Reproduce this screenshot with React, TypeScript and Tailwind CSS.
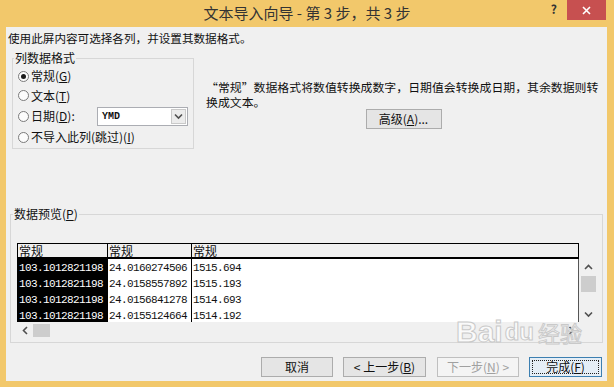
import React from 'react';

const rows = [
  ['103.1012821198', '24.0160274506', '1515.694'],
  ['103.1012821198', '24.0158557892', '1515.193'],
  ['103.1012821198', '24.0156841278', '1514.693'],
  ['103.1012821198', '24.0155124664', '1514.192'],
];

const Chevron: React.FC<{ dir: 'up' | 'down' | 'left' | 'right' }> = ({ dir }) => {
  const d = {
    up: 'M1 5 L4.5 1.5 L8 5',
    down: 'M1 1.5 L4.5 5 L8 1.5',
    left: 'M5 1 L1.5 4.5 L5 8',
    right: 'M1.5 1 L5 4.5 L1.5 8',
  }[dir];
  const vertical = dir === 'up' || dir === 'down';
  return (
    <svg width={vertical ? 9 : 7} height={vertical ? 7 : 9} viewBox={vertical ? '0 0 9 7' : '0 0 7 9'}>
      <path d={d} fill="none" stroke="#505050" strokeWidth="1.6" />
    </svg>
  );
};

const Radio: React.FC<{ checked?: boolean; children: React.ReactNode }> = ({ checked, children }) => (
  <div className="flex items-center">
    <span className="flex h-[11px] w-[11px] items-center justify-center rounded-full border border-[#7a7a7a] bg-[#fcfcfc]">
      {checked && <span className="h-[5px] w-[5px] rounded-full bg-[#1a1a1a]" />}
    </span>
    <span className="ml-[2px]">{children}</span>
  </div>
);

export default function App() {
  return (
    <div className="relative flex h-[387px] w-[614px] flex-col overflow-hidden bg-[#f2c86b] font-['Noto_Sans_CJK_SC',sans-serif] text-[12px] leading-[16px] text-[#111]">
      {/* title bar */}
      <div className="grid h-[27px] grid-cols-[69px_1fr_69px]">
        <div />
        <div className="pt-[3px] text-center text-[15px] leading-[20px] text-[#333]">文本导入向导 - 第 3 步，共 3 步</div>
        <div className="flex items-start justify-end pr-[8px]">
          <span className="mr-[10px] mt-[1px] text-[12px] font-bold text-[#333]">?</span>
          <div className="flex h-[20px] w-[39px] shrink-0 items-center justify-center bg-[#c75050]">
            <svg width="9" height="9" viewBox="0 0 9 9">
              <path d="M1 1 L8 8 M8 1 L1 8" stroke="#fff" strokeWidth="1.6" />
            </svg>
          </div>
        </div>
      </div>

      {/* dialog body */}
      <div className="mb-[6px] ml-[6px] mr-[7px] flex flex-1 flex-col bg-[#f0f0f0]">
        <div className="ml-[2px] pt-[3px] text-[11.6px]">使用此屏内容可选择各列，并设置其数据格式。</div>

        <div className="mt-[4px] flex">
          <fieldset className="ml-[6px] h-[99px] w-[182px] shrink-0 border border-[#d7d7d7] pl-[1px]">
            <legend className="px-[1px] leading-[16px]">列数据格式</legend>
            <div className="flex flex-col pl-[4px] pr-[5px]">
              <div className="flex h-[20px] items-center">
                <Radio checked>常规(<u>G</u>)</Radio>
              </div>
              <div className="flex h-[19px] items-center">
                <Radio>文本(<u>T</u>)</Radio>
              </div>
              <div className="flex h-[22px] items-center">
                <Radio>日期(<u>D</u>):</Radio>
                <div className="ml-auto flex h-[19px] w-[91px] border border-[#abadb3] bg-white">
                  <span className="flex-1 pl-[4px] font-['Liberation_Mono',monospace] text-[10px] font-bold leading-[17px]">YMD</span>
                  <span className="m-[1px] flex w-[15px] items-center justify-center border border-[#c9c9c9] bg-[#ececec]">
                    <Chevron dir="down" />
                  </span>
                </div>
              </div>
              <div className="flex h-[20px] items-center">
                <Radio>不导入此列(跳过)(<u>I</u>)</Radio>
              </div>
            </div>
          </fieldset>

          <div className="ml-[12px] flex flex-1 flex-col pt-[29px]">
            <p className="whitespace-nowrap text-[11.9px] leading-[15px]">
              “常规”数据格式将数值转换成数字，日期值会转换成日期，其余数据则转
              <br />
              换成文本。
            </p>
            <div className="flex justify-center pr-[6px]">
              <button className="h-[20px] w-[76px] border border-[#acacac] bg-[#e5e5e5] text-[12px] leading-[16px]">
                高级(<u>A</u>)...
              </button>
            </div>
          </div>
        </div>

        <fieldset className="ml-[4px] mt-[57px] h-[137px] w-[593px] border border-[#d7d7d7] pl-[2px]">
          <legend className="px-[1px] leading-[16px]">数据预览(<u>P</u>)</legend>
          <div className="ml-[4px] mt-[21px] flex w-[580px] flex-col">
            {/* header */}
            <div className="flex h-[16px]">
              <div className="flex w-[562px] border-x border-b-2 border-t border-black bg-[#f0f0f0] leading-[13px]">
                <div className="w-[90px] border-r border-black pl-[1px]">常规</div>
                <div className="w-[84px] border-r border-black pl-[1px]">常规</div>
                <div className="flex-1 pl-[1px]">常规</div>
              </div>
            </div>
            {/* body */}
            <div className="flex h-[63px]">
              <div className="flex w-[562px] border-x border-l-black border-r-[#555] bg-white font-['Liberation_Mono',monospace] text-[11px] leading-[16px] tracking-[-0.6px]">
                <div className="flex w-[90px] flex-col bg-black pl-[1px] pt-[1px] text-white">
                  {rows.map((r, i) => (
                    <div key={i} className="h-[16px]">{r[0]}</div>
                  ))}
                </div>
                <div className="flex w-[84px] flex-col border-r border-black pl-[1px] pt-[1px]">
                  {rows.map((r, i) => (
                    <div key={i} className="h-[16px]">{r[1]}</div>
                  ))}
                </div>
                <div className="flex flex-1 flex-col pl-[1px] pt-[1px]">
                  {rows.map((r, i) => (
                    <div key={i} className="h-[16px]">{r[2]}</div>
                  ))}
                </div>
              </div>
              <div className="flex w-[18px] flex-col items-center">
                <div className="flex h-[16px] items-center justify-center"><Chevron dir="up" /></div>
                <div className="mt-[1px] h-[16px] w-[15px] bg-[#cdcdcd]" />
                <div className="flex-1" />
                <div className="flex h-[16px] items-center justify-center"><Chevron dir="down" /></div>
              </div>
            </div>
            {/* horizontal scrollbar */}
            <div className="flex h-[16px] w-[562px] items-center">
              <div className="flex w-[16px] items-center justify-center"><Chevron dir="left" /></div>
              <div className="h-[13px] w-[17px] bg-[#cdcdcd]" />
              <div className="flex-1" />
              <div className="flex w-[16px] items-center justify-center"><Chevron dir="right" /></div>
            </div>
          </div>
        </fieldset>

        <div className="mt-[14px] flex justify-end pr-[5px]">
          <button className="h-[20px] w-[72px] border border-[#acacac] bg-[#e5e5e5] text-[12px]">取消</button>
          <button className="ml-[10px] h-[20px] w-[83px] border border-[#acacac] bg-[#e5e5e5] text-[12px]">
            &lt; 上一步(<u>B</u>)
          </button>
          <button className="ml-[11px] h-[20px] w-[82px] border border-[#bfbfbf] bg-[#f4f4f4] text-[12px] text-[#a0a0a0]">
            下一步(<u>N</u>) &gt;
          </button>
          <button className="ml-[10px] flex h-[20px] w-[73px] items-stretch border border-[#3c7fb1] bg-[#e5eef6] p-[2px] text-[12px]">
            <span className="flex flex-1 items-center justify-center border border-dotted border-[#222] leading-[14px]">
              完成(<u>F</u>)
            </span>
          </button>
        </div>
      </div>

      {/* watermark */}
      <div className="pointer-events-none absolute left-[456px] top-[316px] flex items-end text-[30px] font-bold leading-[32px] text-white/70 [-webkit-text-stroke:1px_#c9c9c9]">
        <span className="font-['Liberation_Sans',sans-serif]">Bai</span>
        <span className="ml-[2px] font-['Liberation_Sans',sans-serif] text-[24px]">du</span>
        <span className="ml-[4px] text-[22px] font-normal">经验</span>
      </div>
    </div>
  );
}
